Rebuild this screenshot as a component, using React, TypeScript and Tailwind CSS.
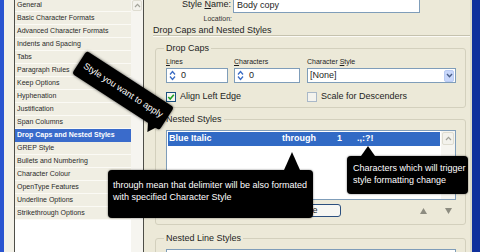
import React from 'react';

const categories = [
  'General',
  'Basic Character Formats',
  'Advanced Character Formats',
  'Indents and Spacing',
  'Tabs',
  'Paragraph Rules',
  'Keep Options',
  'Hyphenation',
  'Justification',
  'Span Columns',
  'Drop Caps and Nested Styles',
  'GREP Style',
  'Bullets and Numbering',
  'Character Colour',
  'OpenType Features',
  'Underline Options',
  'Strikethrough Options',
];

const ScrollUp: React.FC<{ className?: string }> = ({ className = '' }) => (
  <div className={`flex items-center justify-center rounded-[2px] border border-[#dedcd0] bg-[#f3f2ec] ${className}`}>
    <svg width="7" height="5" viewBox="0 0 7 5">
      <path d="M1 4 L3.5 1.3 L6 4" fill="none" stroke="#a3a39a" strokeWidth="1.2" />
    </svg>
  </div>
);

const SpinIcon = () => (
  <svg width="7" height="11" viewBox="0 0 7 11" className="mx-[1px] shrink-0">
    <path d="M1 4.5 L3.5 1.5 L6 4.5" fill="none" stroke="#3b6cc4" strokeWidth="1.3" />
    <path d="M1 6.5 L3.5 9.5 L6 6.5" fill="none" stroke="#3b6cc4" strokeWidth="1.3" />
  </svg>
);

const SpinField: React.FC<{ width: string }> = ({ width }) => (
  <div className={`flex h-[15px] items-center gap-[4px] border border-[#7f9db9] bg-white pl-[1px] text-[9px] ${width}`}>
    <SpinIcon />
    <span>0</span>
  </div>
);

const CategoryList = () => (
  <div className="-mt-px flex w-[130px] shrink-0 border-x border-[#4e4e48] bg-white">
    <div className="w-[116px] text-[7px] leading-[12px] text-[#2a2a2a]">
      {categories.map((c) => {
        const active = c === 'Drop Caps and Nested Styles';
        return (
          <div
            key={c}
            className={`h-[13px] border-b pl-[2px] ${
              active
                ? 'border-[#3a6bcb] bg-[#3a6bcb] font-bold text-white'
                : 'border-[#fbfaf5] bg-[#f0eee3]'
            }`}
          >
            {c}
          </div>
        );
      })}
    </div>
    <div className="flex-1 bg-[#f6f5f0] pt-[1px]">
      <ScrollUp className="mx-[1px] h-[11px]" />
    </div>
  </div>
);

const Underlined: React.FC<{ text: string; at: number }> = ({ text, at }) => (
  <>
    {text.slice(0, at)}
    <span className="underline">{text[at]}</span>
    {text.slice(at + 1)}
  </>
);

const App: React.FC = () => {
  return (
    <div className="relative flex h-[252px] w-[480px] overflow-hidden bg-[#ece9d8] font-['Liberation_Sans',Arial,sans-serif] text-[#1e1e1e]">
      <div className="w-[4px] shrink-0 bg-[#2a55d0]" />
      <div className="w-[10px] shrink-0 bg-[#f3f1e8]" />
      <CategoryList />

      <div className="flex min-w-0 flex-1 flex-col">
        <div className="-mt-[3px] flex h-[16px] items-center">
          <div className="w-[89px] pr-[2px] text-right text-[9px]">
            Style <Underlined text="Name" at={0} />:
          </div>
          <div className="h-[16px] w-[187px] border border-[#7f9db9] bg-white pl-[3px] text-[9px] leading-[14px]">
            Body copy
          </div>
        </div>
        <div className="mt-[2px] w-[88px] text-right text-[7px] leading-[7px] text-[#333]">Location:</div>
        <div className="mt-[3px] ml-[9px] border-b border-[#c5c2ae] text-[9px] leading-[10px] shadow-[0_1px_0_#fbfaf5]">
          Drop Caps and Nested Styles
        </div>

        <fieldset className="mt-[7px] ml-[11px] mr-[4px] rounded-[3px] border border-[#d3d0bd] pl-[10px] pr-[9px] pb-[5px]">
          <legend className="-ml-[2px] px-[2px] text-[9px] leading-[11px]">Drop Caps</legend>
          <div className="mt-[4px] flex text-[7px] leading-[8px]">
            <div className="w-[68px]"><Underlined text="Lines" at={0} /></div>
            <div className="w-[73px]"><Underlined text="Characters" at={0} /></div>
            <div>Character <Underlined text="Style" at={0} /></div>
          </div>
          <div className="mt-[2px] flex">
            <SpinField width="w-[62px] mr-[6px]" />
            <SpinField width="w-[66px] mr-[7px]" />
            <div className="flex h-[15px] flex-1 items-center border border-[#7f9db9] bg-white pl-[2px] pr-[1px] text-[9px]">
              <span className="flex-1">[None]</span>
              <div className="flex h-[12px] w-[10px] items-center justify-center rounded-[2px] border border-[#b9cbf3] bg-[#c8d7fb]">
                <svg width="7" height="5" viewBox="0 0 7 5">
                  <path d="M1 1 L3.5 3.7 L6 1" fill="none" stroke="#4b5f86" strokeWidth="1.4" />
                </svg>
              </div>
            </div>
          </div>
          <div className="mt-[9px] flex h-[10px] items-center text-[9px]">
            <div className="flex w-[141px] items-center gap-[4px]">
              <div className="flex h-[10px] w-[10px] items-center justify-center border border-[#1c5180] bg-[#f6f6f0]">
                <svg width="8" height="8" viewBox="0 0 8 8">
                  <path d="M1.3 4 L3.2 6 L6.8 1.8" fill="none" stroke="#21a121" strokeWidth="1.6" />
                </svg>
              </div>
              <span>Align Left Edge</span>
            </div>
            <div className="flex items-center gap-[4px]">
              <div className="h-[10px] w-[10px] border border-[#a9b8c8] bg-[#f4f3ee]" />
              <span>Scale for Descenders</span>
            </div>
          </div>
        </fieldset>

        <fieldset className="mt-[6px] ml-[11px] mr-[4px] rounded-[3px] border border-[#d3d0bd] pl-[10px] pr-[9px] pb-[7px]">
          <legend className="-ml-[2px] px-[2px] text-[9px] leading-[11px]">Nested Styles</legend>
          <div className="mt-[5px] flex h-[70px] border border-[#7f9db9] bg-white">
            <div className="flex-1 p-[1px]">
              <div className="flex h-[14px] items-center bg-[#316ac5] pl-[1px] text-[9px] font-bold text-white">
                <span className="w-[113px]">Blue Italic</span>
                <span className="w-[55px]">through</span>
                <span className="w-[20px]">1</span>
                <span>.,:?!</span>
              </div>
            </div>
            <div className="w-[14px] bg-[#f6f5f0] pt-[1px]">
              <ScrollUp className="mx-[1px] h-[13px]" />
            </div>
          </div>
          <div className="mt-[4px] flex h-[13px] items-center text-[9px]">
            <div className="ml-[102px] flex h-[13px] w-[73px] items-center justify-center rounded-[3px] border border-[#2b4f7e] bg-[#f7f7f3]">
              Delete
            </div>
            <div className="ml-auto flex items-center gap-[18px] pr-[4px]">
              <svg width="7" height="6" viewBox="0 0 7 6">
                <path d="M3.5 0 L7 6 H0 Z" fill="#8d8c80" />
              </svg>
              <svg width="7" height="6" viewBox="0 0 7 6">
                <path d="M0 0 H7 L3.5 6 Z" fill="#8d8c80" />
              </svg>
            </div>
          </div>
        </fieldset>

        <fieldset className="mt-[8px] ml-[11px] mr-[4px] rounded-[3px] border border-[#d3d0bd] pl-[10px] pr-[9px]">
          <legend className="-ml-[2px] px-[2px] text-[9px] leading-[11px]">Nested Line Styles</legend>
          <div className="mt-[5px] h-[30px] border border-[#7f9db9] bg-white" />
        </fieldset>
      </div>

      <div className="w-[2px] shrink-0 bg-[#dedbc9]" />
      <div className="w-[8px] shrink-0 bg-[#10309c]" />

      {/* annotation callouts */}
      <div className="absolute left-[71px] top-[77px] flex h-[27px] w-[104px] rotate-[33deg] items-center justify-center whitespace-nowrap rounded-[3px] bg-black text-[9px] text-white shadow-[0_0_3px_rgba(0,0,0,0.7)]">
        Style you want to apply
        <div className="absolute -bottom-[8px] right-[4px] h-0 w-0 border-x-[5px] border-t-[9px] border-x-transparent border-t-black" />
      </div>

      <div className="absolute left-[108px] top-[170px] h-[48px] w-[205px] whitespace-nowrap rounded-[4px] bg-black pl-[5px] pt-[10px] text-[9px] leading-[11.5px] text-white shadow-[0_0_2px_rgba(0,0,0,0.6)]">
        through mean that delimiter will be also formated
        <br />
        with specified Character Style
        <div className="absolute -top-[18px] left-[176px] h-0 w-0 border-x-[8px] border-b-[18px] border-x-transparent border-b-black" />
      </div>

      <div className="absolute left-[347px] top-[156px] h-[38px] w-[121px] whitespace-nowrap rounded-[4px] bg-black pl-[6px] pt-[6px] text-[9px] leading-[12px] text-white shadow-[0_0_2px_rgba(0,0,0,0.6)]">
        Characters which will trigger
        <br />
        style formatting change
        <div className="absolute -top-[10px] left-[14px] h-0 w-0 border-x-[7px] border-b-[10px] border-x-transparent border-b-black" />
      </div>
    </div>
  );
};

export default App;
